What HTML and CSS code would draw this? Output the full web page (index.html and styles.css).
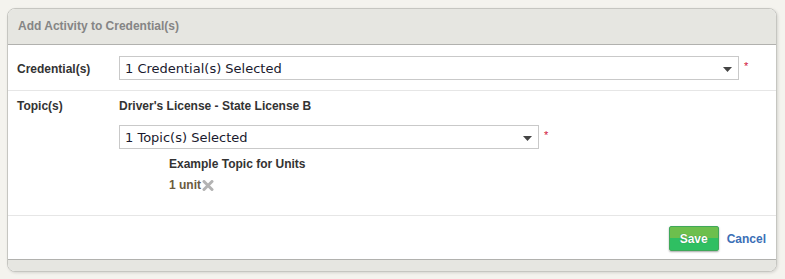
FILE: index.html
```html
<html>
    <head>
        <title>Add Activity to Credential(s)</title>
        <link rel="stylesheet" href="styles.css">
    </head>
    <body>
        <div class="okno">
            <div class="okno-head">Add Activity to Credential(s)</div>
            <div class="stroka stroka1">
                <div class="metka metka1">Credential(s)</div>
                <div class="pole">
                    <div class="vybor vybor-big">
                        <span>1 Credential(s) Selected</span>
                        <svg class="strelka" width="9" height="5" viewBox="0 0 9 5"><path d="M0 0H9L4.5 5Z" fill="#444"/></svg>
                    </div>
                    <span class="zvezda">*</span>
                </div>
            </div>
            <div class="stroka stroka2">
                <div class="metka">Topic(s)</div>
                <div class="pole-col">
                    <div class="nazv">Driver's License - State License B</div>
                    <div class="pole">
                        <div class="vybor vybor-small">
                            <span>1 Topic(s) Selected</span>
                            <svg class="strelka" width="9" height="5" viewBox="0 0 9 5"><path d="M0 0H9L4.5 5Z" fill="#444"/></svg>
                        </div>
                        <span class="zvezda">*</span>
                    </div>
                    <div class="tema">
                        <div class="tema-nazv">Example Topic for Units</div>
                        <div class="tema-ed">1 unit<svg class="krest" width="12" height="11" viewBox="0 0 12 11"><path d="M2 1.5L10 9.5M10 1.5L2 9.5" stroke="#b3b3b3" stroke-width="3" stroke-linecap="round"/></svg></div>
                    </div>
                </div>
            </div>
            <div class="knopki-cont">
                <button class="knopka-save">Save</button>
                <a class="otmena" href="#">Cancel</a>
            </div>
            <div class="okno-niz"></div>
        </div>
    </body>
</html>
```

FILE: styles.css
```css
body {
        margin: 0;
        padding: 8px 0 0 7px;
        background: #f4f3ee;
        font-family: "Liberation Sans", Arial, sans-serif;
        font-size: 12px;}

.okno {
        width: 768px;
        border: 1px solid #c6c6c1;
        border-radius: 8px;
        background: #fff;
        overflow: hidden;
        box-shadow: 1px 1px 3px rgba(0, 0, 0, 0.12);}

.okno-head {
        height: 35px;
        line-height: 35px;
        padding-left: 10px;
        background: #e6e6e1;
        border-bottom: 1px solid #b1b1ae;
        color: #858585;
        font-weight: bold;}

.stroka {
        display: flex;
        padding: 11px 9px 10px 9px;
        border-bottom: 1px solid #e6e6e6;}

.stroka2 {padding-top: 8px; padding-bottom: 23px;}

.metka {
        width: 102px;
        color: #333;
        font-weight: bold;
        line-height: 14px;}

.metka1 {padding-top: 6px;}

.pole {display: flex;}

.vybor {
        box-sizing: border-box;
        height: 24px;
        border: 1px solid #c9c9c9;
        display: flex;
        align-items: center;
        justify-content: space-between;
        padding: 0 6px 0 5px;
        font-family: "DejaVu Sans", Verdana, sans-serif;
        font-size: 13px;
        color: #1a1a2e;}

.vybor-big {width: 620px;}
.vybor-small {width: 420px;}

.strelka {margin-top: 2px;}

.zvezda {
        color: #d0103a;
        font-size: 11px;
        margin: 5px 0 0 5px;
        line-height: 10px;}

.nazv {
        color: #333;
        font-weight: bold;
        line-height: 14px;
        margin-bottom: 12px;}

.tema {padding: 8px 0 0 50px;}

.tema-nazv {
        color: #333;
        font-weight: bold;
        line-height: 14px;
        margin-bottom: 7px;}

.tema-ed {
        color: #6b5b3e;
        font-weight: bold;
        line-height: 14px;
        display: flex;
        align-items: center;}

.krest {margin-left: 1px;}

.knopki-cont {
        display: flex;
        justify-content: flex-end;
        align-items: center;
        gap: 8px;
        padding: 10px 10px 8px 0;}

.knopka-save {
        width: 50px;
        height: 25px;
        border: 1px solid #3fa85a;
        border-radius: 2px;
        background: linear-gradient(#6dbf4d 0%, #6dbf4d 50%, #2fbf62 50%, #2fbf62 100%);
        color: #fff;
        font-family: "Liberation Sans", Arial, sans-serif;
        font-size: 12px;
        font-weight: bold;
        text-shadow: 0 0 1px #2a7a3a;
        box-shadow: 0 1px 2px rgba(0, 0, 0, 0.35);}

.otmena {
        color: #3b6fb6;
        font-weight: bold;
        text-decoration: none;}

.okno-niz {
        height: 11px;
        background: #e6e6e1;
        border-top: 1px solid #b1b1ae;}
```
